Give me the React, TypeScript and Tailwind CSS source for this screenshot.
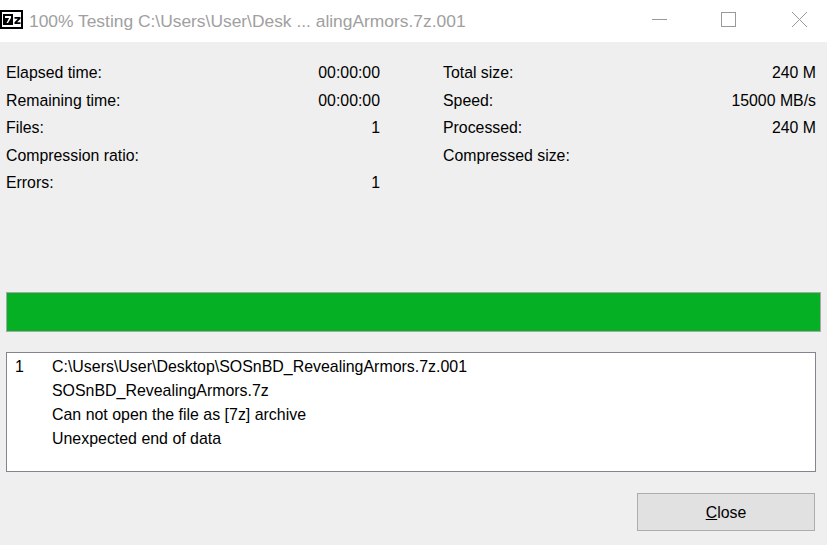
const leftRows = [
  ["Elapsed time:", "00:00:00"],
  ["Remaining time:", "00:00:00"],
  ["Files:", "1"],
  ["Compression ratio:", ""],
  ["Errors:", "1"],
];

const rightRows = [
  ["Total size:", "240 M"],
  ["Speed:", "15000 MB/s"],
  ["Processed:", "240 M"],
  ["Compressed size:", ""],
];

const messages = [
  "C:\\Users\\User\\Desktop\\SOSnBD_RevealingArmors.7z.001",
  "SOSnBD_RevealingArmors.7z",
  "Can not open the file as [7z] archive",
  "Unexpected end of data",
];

const StatColumn = ({ rows }: { rows: string[][] }) => (
  <div className="flex flex-col">
    {rows.map(([label, value]) => (
      <div key={label} className="flex h-[27.5px] items-center justify-between">
        <span>{label}</span>
        <span>{value}</span>
      </div>
    ))}
  </div>
);

export default function App() {
  return (
    <div className="flex h-[545px] w-[827px] flex-col overflow-hidden bg-[#efefef] font-['Liberation_Sans',Arial,sans-serif] text-[15.85px] text-black">
      {/* Title bar */}
      <div className="flex h-[42px] shrink-0 items-center bg-white">
        <svg width="23" height="19" viewBox="0 0 23 19" className="mb-[3px] mr-[6px] shrink-0">
          <rect x="1" y="1" width="21" height="17" fill="#fff" stroke="#000" strokeWidth="2" />
          <rect x="3" y="4" width="10" height="11" fill="#000" />
          <path d="M5 6h6v2l-3 5H6.5l2.6-5H5z" fill="#fff" />
          <path d="M14.5 7h6v1.8l-3.4 3.4h3.4V14h-6v-1.8l3.4-3.4h-3.4z" fill="#000" />
        </svg>
        <span className="flex-1 text-[17.4px] text-[#a0a0a0]">100% Testing C:\Users\User\Desk ... alingArmors.7z.001</span>
        <div className="mb-[3px] mr-[20px] flex items-center gap-[54px]">
          <svg width="15" height="15" viewBox="0 0 15 15" className="text-[#999]">
            <path d="M0 7.5h15" stroke="currentColor" fill="none" />
          </svg>
          <svg width="15" height="15" viewBox="0 0 15 15" className="text-[#999]">
            <rect x="0.5" y="0.5" width="14" height="14" stroke="currentColor" fill="none" />
          </svg>
          <svg width="15" height="15" viewBox="0 0 15 15" className="ml-[2px] text-[#999]">
            <path d="M0 0l15 15M15 0L0 15" stroke="currentColor" fill="none" />
          </svg>
        </div>
      </div>

      {/* Stats */}
      <div className="mt-[17.5px] grid h-[232.5px] shrink-0 grid-cols-[374px_373px] gap-x-[63px] px-[6px]">
        <StatColumn rows={leftRows} />
        <StatColumn rows={rightRows} />
      </div>

      {/* Progress */}
      <div className="mx-[6px] h-[40px] shrink-0 border border-[#a8a8a8] bg-[#06b025]" />

      {/* Message list */}
      <div className="mx-[6px] mt-[20px] flex h-[120px] w-[810px] shrink-0 border border-[#82878f] bg-white pt-[2px] text-[15.93px]">
        <div className="w-[45px] pl-[8px] leading-[24px]">1</div>
        <div className="flex flex-col leading-[24px]">
          {messages.map((m) => (
            <div key={m}>{m}</div>
          ))}
        </div>
      </div>

      {/* Footer */}
      <div className="mt-[21px] flex justify-end pr-[12px]">
        <button className="h-[38px] w-[178px] border border-[#adadad] bg-[#e1e1e1] pt-[1px]">
          <span className="underline">C</span>lose
        </button>
      </div>
    </div>
  );
}
